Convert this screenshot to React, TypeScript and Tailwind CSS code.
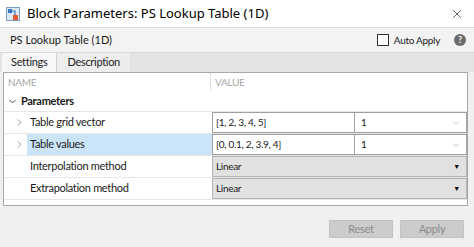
import { ChevronDown, ChevronRight, X } from 'lucide-react';

const font = { fontFamily: 'Lato, "Noto Sans", Arial, sans-serif' };

function BlockIcon() {
    return (
        <svg width="14" height="14" viewBox="0 0 14 14">
            <rect x="0.5" y="0.5" width="13" height="13" fill="#dbe9f7" stroke="#7a9cc0" />
            <rect x="2" y="2" width="4" height="4" fill="#3b78c2" />
            <path d="M6 4 H9 V8" stroke="#3b78c2" strokeWidth="1.2" fill="none" />
            <rect x="7" y="8" width="5" height="5" fill="#e0582b" />
        </svg>
    );
}

function HelpIcon() {
    return (
        <div className="w-[12px] h-[12px] rounded-full bg-[#6b6b6b] text-white text-[9px] font-bold leading-[12px] text-center">?</div>
    );
}

type Row = { name: string; expand?: boolean; selected?: boolean; kind: 'text' | 'select'; value: string; unit?: string };

const rows: Row[] = [
    { name: 'Table grid vector', expand: true, kind: 'text', value: '[1, 2, 3, 4, 5]', unit: '1' },
    { name: 'Table values', expand: true, selected: true, kind: 'text', value: '[0, 0.1, 2, 3.9, 4]', unit: '1' },
    { name: 'Interpolation method', kind: 'select', value: 'Linear' },
    { name: 'Extrapolation method', kind: 'select', value: 'Linear' },
];

export default function App() {
    return (
        <div className="w-[474px] h-[247px] bg-[#f0f0f0] flex flex-col text-[11px] tracking-[-0.3px] text-[#1a1a1a] overflow-hidden" style={font}>
            {/* title bar */}
            <div className="h-[28px] bg-white flex items-center pl-[6px] pr-[10px] border-b border-[#dadada]">
                <BlockIcon />
                <span className="ml-[7px] text-[13px] tracking-normal text-black" style={{ fontFamily: '"Noto Sans", Arial, sans-serif' }}>
                    Block Parameters: PS Lookup Table (1D)
                </span>
                <X className="ml-auto text-[#222]" size={14} strokeWidth={1.2} />
            </div>

            {/* header */}
            <div className="h-[25px] bg-[#f3f3f3] flex items-center pl-[10px] pr-[8px] border-b border-[#d8d8d8]">
                <span className="tracking-normal">PS Lookup Table (1D)</span>
                <div className="ml-auto flex items-center">
                    <div className="w-[12px] h-[12px] border border-[#333] bg-white" />
                    <span className="ml-[5px] text-[10px]">Auto Apply</span>
                    <div className="ml-[14px]"><HelpIcon /></div>
                </div>
            </div>

            {/* tabs */}
            <div className="h-[19px] bg-[#e4e4e4] flex items-end pl-[2px]">
                <div className="h-[19px] px-[9px] bg-[#f7f7f7] flex items-center">Settings</div>
                <div className="h-[19px] px-[10px] bg-[#ededed] flex items-center border-l border-[#d0d0d0]">Description</div>
            </div>

            {/* parameters panel */}
            <div className="ml-[3px] mr-[6px] h-[134px] bg-white border border-[#a8a8a8] flex flex-col">
                <div className="h-[18px] flex items-center text-[10px] text-[#a6a6a6]">
                    <div className="w-[207px] pl-[4px] border-r border-[#e0e0e0] h-full flex items-center">NAME</div>
                    <div className="pl-[4px]">VALUE</div>
                </div>
                <div className="h-[21px] flex items-center pl-[3px] border-b border-[#e6e6e6]">
                    <ChevronDown size={11} strokeWidth={2} className="text-[#333]" />
                    <span className="ml-[3px] font-bold">Parameters</span>
                </div>
                {rows.map((r) => (
                    <div key={r.name} className="h-[22px] flex border-b border-[#e6e6e6]">
                        <div className="w-[208px] flex items-center">
                            <div className="w-[23px] flex justify-end pr-[2px]">
                                {r.expand && <ChevronRight size={11} strokeWidth={1.5} className="text-[#666]" />}
                            </div>
                            <div className={`flex-1 h-full flex items-center pl-[3px] ${r.selected ? 'bg-[#cce4f7]' : ''}`}>{r.name}</div>
                        </div>
                        {r.kind === 'text' ? (
                            <div className="flex-1 flex">
                                <div className="w-[143px] h-full border border-[#a0a0a0] flex items-center pl-[3px] text-[10px]">{r.value}</div>
                                <div className="flex-1 h-full border border-l-0 border-[#a0a0a0] flex items-center pl-[6px] pr-[5px] text-[10px]">
                                    <span>{r.unit}</span>
                                    <ChevronDown size={10} strokeWidth={1.2} className="ml-auto text-[#888]" />
                                </div>
                            </div>
                        ) : (
                            <div className="flex-1 h-full bg-[#e1e1e1] border border-[#b4b4b4] flex items-center pl-[3px] pr-[6px] text-[10px]">
                                <span>{r.value}</span>
                                <span className="ml-auto text-[7px] text-black">▼</span>
                            </div>
                        )}
                    </div>
                ))}
            </div>

            {/* buttons */}
            <div className="flex justify-end gap-[7px] pr-[10px] mt-[14px]">
                <div className="w-[64px] h-[18px] bg-[#cccccc] border border-[#c2c2c2] text-[#8a8a8a] flex items-center justify-center">Reset</div>
                <div className="w-[64px] h-[18px] bg-[#cccccc] border border-[#c2c2c2] text-[#8a8a8a] flex items-center justify-center">Apply</div>
            </div>
        </div>
    );
}
